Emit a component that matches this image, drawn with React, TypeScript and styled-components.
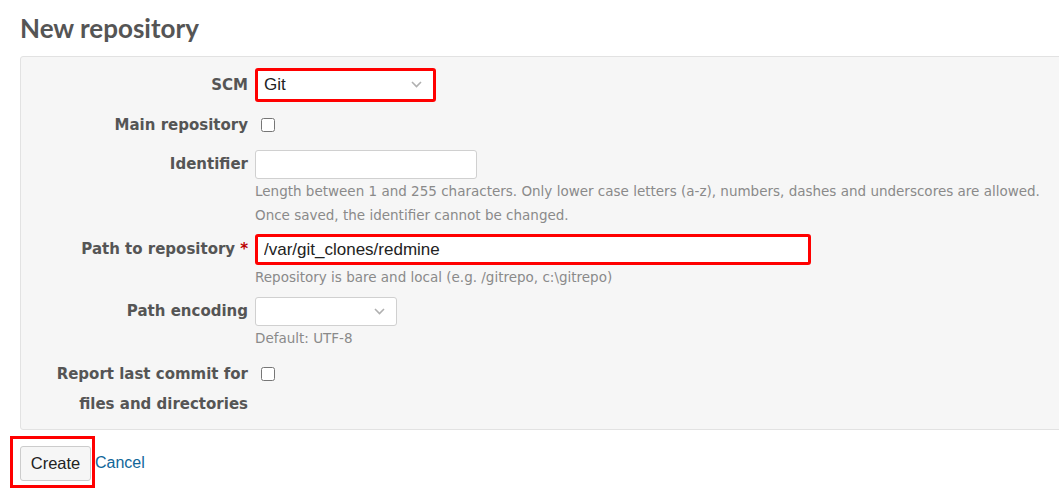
import styled, { createGlobalStyle } from "styled-components";

const GlobalStyle = createGlobalStyle`
  html, body {
    margin: 0;
    padding: 0;
    background: #fff;
    overflow: hidden;
  }
  body {
    font-family: "DejaVu Sans", Verdana, sans-serif;
    color: #333;
  }
`

const Page = styled.div`
  padding: 0 0 0 20px;
  width: 1059px;
  box-sizing: border-box;
`

const Title = styled.h2`
  margin: 0;
  padding: 12px 0 0 0;
  height: 56px;
  box-sizing: border-box;
  font-family: Lato, "Open Sans", sans-serif;
  font-weight: 700;
  font-size: 26px;
  line-height: 32px;
  color: #555;
`

const Box = styled.div`
  margin-right: -20px;
  background: #f6f6f6;
  border: 1px solid #e2e2e2;
  border-radius: 3px;
  padding: 11px 0 10px 0;
  display: flex;
  flex-direction: column;
`

const Row = styled.div<{ $lh: number; $gap?: number }>`
  display: grid;
  grid-template-columns: 227px 1fr;
  column-gap: 7px;
  align-items: start;
  margin-top: ${(p) => p.$gap ?? 0}px;
  line-height: ${(p) => p.$lh}px;
`

const Label = styled.label`
  text-align: right;
  font-weight: bold;
  font-size: 15px;
  color: #555;
  white-space: nowrap;
`

const Required = styled.span`
  color: #bb0000;
  margin-left: 5px;
`

const Field = styled.div`
  display: flex;
  flex-direction: column;
  align-items: flex-start;
`

const Help = styled.em`
  font-style: normal;
  font-size: 13.5px;
  line-height: 24px;
  color: #8a8a8a;
  white-space: nowrap;
`

const TextInput = styled.input<{ $w: number; $marked?: boolean }>`
  box-sizing: border-box;
  width: ${(p) => p.$w}px;
  height: ${(p) => (p.$marked ? 31 : 29)}px;
  border: ${(p) => (p.$marked ? "3px solid #ff0000" : "1px solid #d0d0d0")};
  border-radius: 3px;
  background: #fff;
  padding: 0 0 0 ${(p) => (p.$marked ? 6 : 8)}px;
  font-family: "Liberation Sans", Arial, sans-serif;
  font-size: 17px;
  color: #222;
  outline: none;
`

const SelectWrap = styled.div<{ $w: number; $marked?: boolean }>`
  position: relative;
  box-sizing: border-box;
  width: ${(p) => p.$w}px;
  height: ${(p) => (p.$marked ? 34 : 29)}px;
  border: ${(p) => (p.$marked ? "3px solid #ff0000" : "1px solid #d0d0d0")};
  border-radius: 3px;
  background: #fff;
`

const Select = styled.select<{ $marked?: boolean }>`
  appearance: none;
  display: block;
  width: 100%;
  height: calc(100% - 2px);
  border: none;
  background: transparent;
  padding: 0 0 0 ${(p) => (p.$marked ? 6 : 8)}px;
  font-family: "Liberation Sans", Arial, sans-serif;
  font-size: 17px;
  color: #222;
  outline: none;
`

const Chevron = styled.svg`
  position: absolute;
  right: 11px;
  top: 50%;
  margin-top: -4px;
  pointer-events: none;
`

const Check = styled.input`
  margin: 8px 0 0 6px;
  width: 14px;
  height: 14px;
`

const Actions = styled.div`
  display: flex;
  align-items: center;
  margin: 6px 0 0 -10px;
`

const Marker = styled.span`
  display: inline-flex;
  border: 3px solid #ff0000;
  padding: 7px 1px 4px 7px;
`

const Button = styled.button`
  box-sizing: border-box;
  width: 71px;
  height: 35px;
  background: #f6f6f6;
  border: 1px solid #cccccc;
  border-radius: 3px;
  font-family: "Liberation Sans", Arial, sans-serif;
  font-size: 16.5px;
  color: #222;
  padding: 0;
`

const CancelLink = styled.a`
  margin: 2px 0 0 0;
  font-family: "Liberation Sans", Arial, sans-serif;
  font-size: 16px;
  color: #116699;
  text-decoration: none;
`

function ChevronIcon() {
  return (
    <Chevron width="11" height="7" viewBox="0 0 11 7">
      <path d="M1 1 L5.5 5.5 L10 1" fill="none" stroke="#b0b0b0" strokeWidth="1.6" />
    </Chevron>
  )
}

export default function App() {
  return (
    <>
      <GlobalStyle />
      <Page>
        <Title>New repository</Title>
        <Box>
          <Row $lh={34}>
            <Label>SCM</Label>
            <Field>
              <SelectWrap $w={181} $marked>
                <Select $marked defaultValue="Git">
                  <option>Git</option>
                </Select>
                <ChevronIcon />
              </SelectWrap>
            </Field>
          </Row>
          <Row $lh={30} $gap={8}>
            <Label>Main repository</Label>
            <Field>
              <Check type="checkbox" />
            </Field>
          </Row>
          <Row $lh={29} $gap={10}>
            <Label>Identifier</Label>
            <Field>
              <TextInput $w={222} type="text" />
              <Help>Length between 1 and 255 characters. Only lower case letters (a-z), numbers, dashes and underscores are allowed.</Help>
              <Help>Once saved, the identifier cannot be changed.</Help>
            </Field>
          </Row>
          <Row $lh={31} $gap={7}>
            <Label>Path to repository<Required>*</Required></Label>
            <Field>
              <TextInput $w={556} $marked type="text" defaultValue="/var/git_clones/redmine" />
              <Help>Repository is bare and local (e.g. /gitrepo, c:\gitrepo)</Help>
            </Field>
          </Row>
          <Row $lh={29} $gap={8}>
            <Label>Path encoding</Label>
            <Field>
              <SelectWrap $w={142}>
                <Select defaultValue="">
                  <option value=""></option>
                </Select>
                <ChevronIcon />
              </SelectWrap>
              <Help>Default: UTF-8</Help>
            </Field>
          </Row>
          <Row $lh={30} $gap={9}>
            <Label>Report last commit for<br />files and directories</Label>
            <Field>
              <Check type="checkbox" />
            </Field>
          </Row>
        </Box>
        <Actions>
          <Marker>
            <Button type="submit">Create</Button>
          </Marker>
          <CancelLink href="#">Cancel</CancelLink>
        </Actions>
      </Page>
    </>
  )
}
